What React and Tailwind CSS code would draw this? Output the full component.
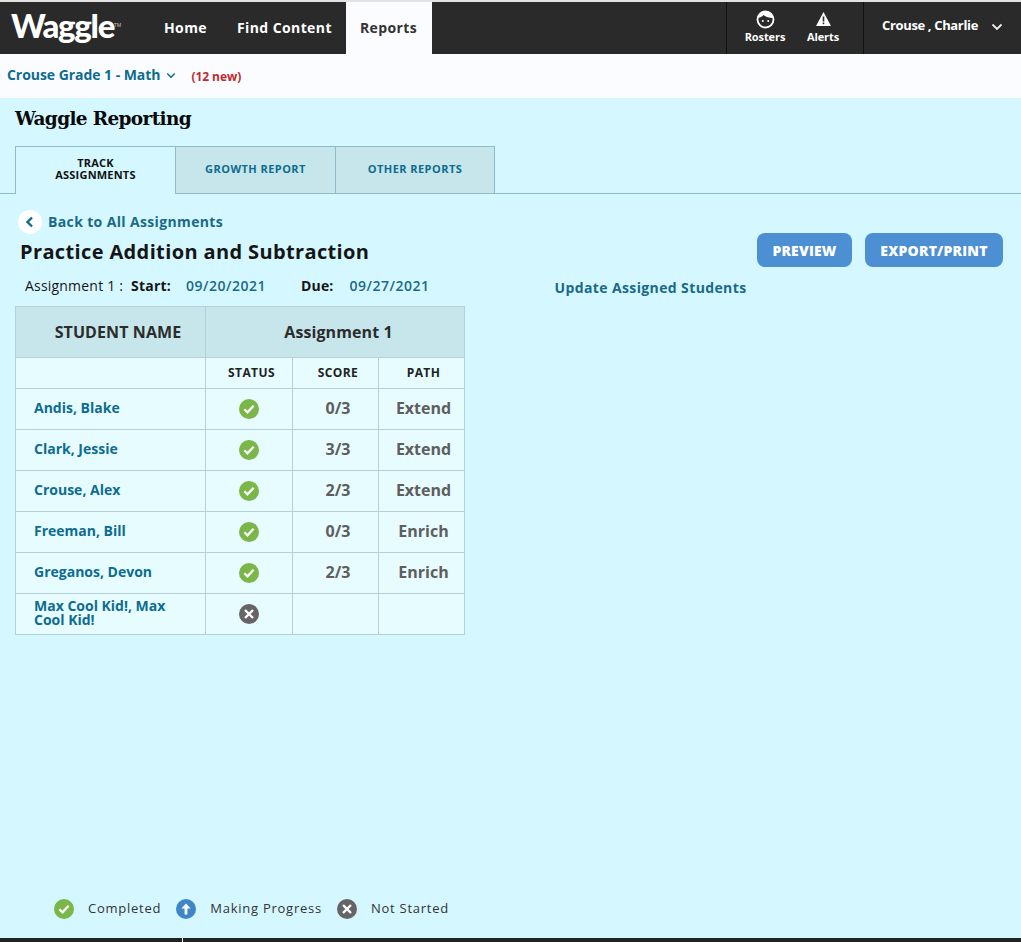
const students = [
  { name: 'Andis, Blake', done: true, score: '0/3', path: 'Extend' },
  { name: 'Clark, Jessie', done: true, score: '3/3', path: 'Extend' },
  { name: 'Crouse, Alex', done: true, score: '2/3', path: 'Extend' },
  { name: 'Freeman, Bill', done: true, score: '0/3', path: 'Enrich' },
  { name: 'Greganos, Devon', done: true, score: '2/3', path: 'Enrich' },
  { name: 'Max Cool Kid!, Max Cool Kid!', done: false, score: '', path: '' },
];

const CheckIcon = () => (
  <svg width="20" height="20" viewBox="0 0 20 20" className="block">
    <circle cx="10" cy="10" r="10" fill="#7ab648" />
    <path d="M5.4 10.2l3.1 3.1 6.100-6.600" fill="none" stroke="#fff" strokeWidth="2.3" />
  </svg>
);

const CrossIcon = () => (
  <svg width="20" height="20" viewBox="0 0 20 20" className="block">
    <circle cx="10" cy="10" r="10" fill="#666464" />
    <path d="M6 6l8 8M14 6l-8 8" fill="none" stroke="#fff" strokeWidth="2.4" />
  </svg>
);

const UpIcon = () => (
  <svg width="20" height="20" viewBox="0 0 20 20" className="block">
    <circle cx="10" cy="10" r="10" fill="#3f86c8" />
    <path d="M10 4.5l4.6 5h-3.2v6h-2.8v-6H5.4z" fill="#fff" />
  </svg>
);

const Chevron = ({ className }) => (
  <svg viewBox="0 0 12 8" className={className}>
    <path d="M1.5 1.5L6 6l4.5-4.5" fill="none" stroke="currentColor" strokeWidth="1.8" />
  </svg>
);

function App() {
  return (
    <div className="min-h-[942px] flex flex-col bg-[#d5f7ff] font-['Open_Sans',sans-serif] text-[#111]">
      <div className="h-[2px] bg-[#e3e3e3]" />

      <header className="h-[52px] flex bg-[#2a2a2a] text-white">
        <div className="w-[164px] pl-[11px] flex items-start pt-[3px]">
          <span className="font-['Lato',sans-serif] font-black text-[33px] leading-[40px] tracking-[-1.3px]">Waggle</span>
          <span className="text-[5px] leading-[5px] mt-[18px] text-[#ccc]">TM</span>
        </div>
        <nav className="flex text-[14px] font-bold tracking-[0.4px]">
          <a className="w-[73px] flex items-center pb-[1px]">Home</a>
          <a className="w-[109px] flex items-center pb-[1px]">Find Content</a>
          <a className="w-[86px] flex items-center justify-center pb-[1px] pr-[1px] bg-[#fbfcff] text-[#333]">Reports</a>
        </nav>
        <div className="ml-auto flex">
          <div className="w-[138px] border-l border-r border-[#111] flex text-[11px] font-bold tracking-[-0.1px]">
            <div className="w-[76px] flex flex-col items-center pt-[8px]">
              <svg width="19" height="19" viewBox="0 0 19 19" className="block">
                <circle cx="9.5" cy="9.5" r="8" fill="none" stroke="#fff" strokeWidth="1.8" />
                <path d="M2 8c2-1 4-1 5.500-3 2 2 6 3 9.500 3l-1-4-4-3H7L3 4z" fill="#fff" />
                <circle cx="6.800" cy="11" r="1" fill="#fff" />
                <circle cx="12.200" cy="11" r="1" fill="#fff" />
              </svg>
              <span className="leading-[15px]">Rosters</span>
            </div>
            <div className="flex-1 flex flex-col items-center pt-[8px] pr-[20px]">
              <svg width="19" height="19" viewBox="0 0 19 19" className="block">
                <path d="M9.500 2L17 16H2z" fill="#fff" />
                <rect x="8.700" y="6.500" width="1.600" height="5" fill="#2a2a2a" />
                <rect x="8.700" y="12.500" width="1.600" height="1.700" fill="#2a2a2a" />
              </svg>
              <span className="leading-[15px]">Alerts</span>
            </div>
          </div>
          <div className="w-[157px] pl-[18px] flex items-start pt-[14px]">
            <span className="text-[13px] leading-[18px] font-bold tracking-[-0.35px]">Crouse , Charlie</span>
            <Chevron className="w-[12px] h-[8px] ml-[13px] mt-[7px] text-[#eee]" />
          </div>
        </div>
      </header>

      <div className="h-[44px] bg-[#fbfcff] flex items-center pl-[7px] pb-[4px]">
        <span className="text-[14px] font-bold tracking-[-0.05px] text-[#0d6c8f]">Crouse Grade 1 - Math</span>
        <Chevron className="w-[10px] h-[7px] ml-[6px] mt-[3px] text-[#0d6c8f]" />
        <span className="ml-[15px] mt-[6px] text-[12px] font-bold tracking-[-0.05px] text-[#c02a2f]">(12 new)</span>
      </div>

      <main className="flex-1 flex flex-col">
        <h1 className="ml-[15px] mt-[8px] h-[40px] font-['DejaVu_Serif',serif] font-bold text-[18.500px] leading-[26px] tracking-[-0.65px] text-[#0a0a0a]">Waggle Reporting</h1>

        <div className="flex h-[48px] pl-[15px] border-b border-[#8fbcc6]">
          <div className="w-[161px] h-[48px] pb-[4px] border-l border-t border-r border-[#8fbcc6] bg-[#d5f7ff] flex items-center justify-center text-center text-[11px] leading-[12px] font-bold tracking-[0.2px] text-[#111]">
            TRACK<br />ASSIGNMENTS
          </div>
          <div className="w-[160px] h-[47px] pb-[2px] border-t border-r border-[#8fbcc6] bg-[#c6e6eb] flex items-center justify-center text-[11px] font-bold tracking-[0.45px] text-[#0d6c8f]">GROWTH REPORT</div>
          <div className="w-[159px] h-[47px] pb-[2px] border-t border-r border-[#8fbcc6] bg-[#c6e6eb] flex items-center justify-center text-[11px] font-bold tracking-[0.45px] text-[#0d6c8f]">OTHER REPORTS</div>
        </div>

        <div className="flex items-center ml-[18px] mt-[16px]">
          <span className="w-[24px] h-[24px] rounded-full bg-white flex items-center justify-center text-[#0d6c8f]">
            <svg width="9" height="12" viewBox="0 0 9 12" className="block -ml-[2px]">
              <path d="M7 1.500L2.500 6 7 10.500" fill="none" stroke="currentColor" strokeWidth="2.400" />
            </svg>
          </span>
          <a className="ml-[6px] -mt-[2px] text-[14px] font-bold tracking-[0.36px] text-[#1a6a86]">Back to All Assignments</a>
        </div>

        <div className="flex justify-between items-start pr-[18px]">
          <h2 className="ml-[20px] mt-[3px] text-[20px] leading-[30px] font-bold tracking-[0.37px] text-[#151515]">Practice Addition and Subtraction</h2>
          <div className="flex gap-[13px] -mt-[1px]">
            <button className="w-[95px] h-[34px] rounded-[8px] bg-[#4c8fd3] text-white text-[14px] font-extrabold tracking-[0.2px]">PREVIEW</button>
            <button className="w-[138px] h-[34px] rounded-[8px] bg-[#4c8fd3] text-white text-[14px] font-extrabold tracking-[0.2px]">EXPORT/PRINT</button>
          </div>
        </div>

        <div className="flex items-center ml-[25px] h-[20px] mt-[8px] text-[14px] text-[#151515] tracking-[0.2px]">
          <span>Assignment 1 :</span>
          <b className="ml-[8px] font-bold">Start:</b>
          <span className="ml-[15px] font-semibold tracking-[0.5px] text-[#1a6a86]">09/20/2021</span>
          <b className="ml-[35px] font-bold">Due:</b>
          <span className="ml-[16px] font-semibold tracking-[0.5px] text-[#1a6a86]">09/27/2021</span>
          <a className="ml-[125px] mt-[4px] font-bold tracking-[0.38px] text-[#1a6a86]">Update Assigned Students</a>
        </div>

        <table className="ml-[15px] mt-[11px] w-[449px] table-fixed border-collapse text-center bg-[#e7fcff]">
          <colgroup>
            <col className="w-[190px]" />
            <col className="w-[87px]" />
            <col className="w-[86px]" />
            <col className="w-[86px]" />
          </colgroup>
          <thead>
            <tr className="h-[51px] bg-[#c6e6eb] text-[16px] text-[#2c2c2c]">
              <th className="border border-[#b5d0d8] font-bold pl-[15px] pb-[1px] tracking-[0.1px]">STUDENT NAME</th>
              <th colSpan={3} className="border border-[#b5d0d8] font-bold pl-[7px] pb-[1px] tracking-[0.1px]">Assignment 1</th>
            </tr>
            <tr className="h-[31px] text-[12px] tracking-[0.4px] text-[#222]">
              <th className="border border-[#b5d0d8]"></th>
              <th className="border border-[#b5d0d8] font-bold pl-[5px] pb-[1px]">STATUS</th>
              <th className="border border-[#b5d0d8] font-bold pl-[5px] pb-[1px]">SCORE</th>
              <th className="border border-[#b5d0d8] font-bold pl-[4px] pb-[1px]">PATH</th>
            </tr>
          </thead>
          <tbody>
            {students.map(s => (
              <tr key={s.name} className="h-[41px]">
                <td className="border border-[#b5d0d8] pl-[18px] pr-[20px] pb-[2px] text-left text-[14px] leading-[14px] font-bold text-[#0d6c8f]">{s.name}</td>
                <td className="border border-[#b5d0d8] pr-[1px]">
                  <div className="flex justify-center">{s.done ? <CheckIcon /> : <CrossIcon />}</div>
                </td>
                <td className="border border-[#b5d0d8] pl-[5px] pb-[2px] text-[16px] font-bold text-[#5e5e5e]">{s.score}</td>
                <td className="border border-[#b5d0d8] pl-[4px] pb-[2px] text-[16px] font-bold text-[#5e5e5e]">{s.path}</td>
              </tr>
            ))}
          </tbody>
        </table>

        <div className="mt-auto mb-[19px] ml-[54px] flex items-center text-[13px] tracking-[0.75px] text-[#333]">
          <CheckIcon />
          <span className="ml-[14px]">Completed</span>
          <span className="ml-[15px]"><UpIcon /></span>
          <span className="ml-[14px]">Making Progress</span>
          <span className="ml-[15px]"><CrossIcon /></span>
          <span className="ml-[14px]">Not Started</span>
        </div>
      </main>

      <footer className="h-[4px] flex bg-[#222]">
        <div className="w-[1px] ml-[182px] bg-white" />
      </footer>
    </div>
  );
}

export default App;
